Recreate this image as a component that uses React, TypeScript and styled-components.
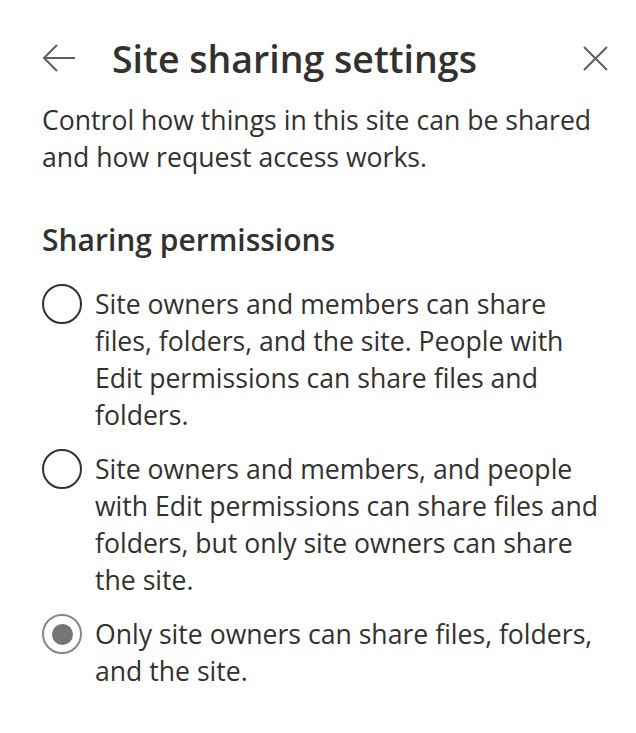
import styled, { createGlobalStyle } from "styled-components";

const GlobalStyle = createGlobalStyle`
  body {
    margin: 0;
    background: #ffffff;
    font-family: "Open Sans", "Noto Sans", sans-serif;
    color: #323130;
  }
`;

const Panel = styled.div`
  padding: 28px 28px 40px 42px;
`;

const Header = styled.div`
  display: flex;
  align-items: center;
  height: 60px;
`;

const IconButton = styled.button`
  display: flex;
  align-items: center;
  justify-content: center;
  background: none;
  border: none;
  padding: 0;
  cursor: pointer;
  color: #605e5c;
`;

const Title = styled.h1`
  flex: 1;
  margin: 0 0 0 36px;
  font-size: 37.5px;
  font-weight: 600;
`;

const Description = styled.p`
  margin: 14px 0 0;
  font-size: 26.6px;
  line-height: 37px;
`;

const SectionTitle = styled.h2`
  margin: 43px 0 0;
  font-size: 30px;
  font-weight: 600;
`;

const Options = styled.div`
  display: flex;
  flex-direction: column;
  gap: 17px;
  margin-top: 26px;
`;

const Option = styled.label`
  display: flex;
  align-items: flex-start;
  gap: 13px;
  font-size: 26.6px;
  line-height: 37px;
  cursor: pointer;
`;

const Radio = styled.span<{ $checked?: boolean }>`
  flex: none;
  box-sizing: border-box;
  width: 40px;
  height: 40px;
  margin-top: -2px;
  border-radius: 50%;
  border: 2px solid ${(p) => (p.$checked ? "#8a8886" : "#323130")};
  display: flex;
  align-items: center;
  justify-content: center;
  &::after {
    content: "";
    display: ${(p) => (p.$checked ? "block" : "none")};
    width: 21px;
    height: 21px;
    border-radius: 50%;
    background: #757575;
  }
`;

const options = [
  "Site owners and members can share files, folders, and the site. People with Edit permissions can share files and folders.",
  "Site owners and members, and people with Edit permissions can share files and folders, but only site owners can share the site.",
  "Only site owners can share files, folders, and the site.",
];

const App = () => {
  const selected = 2;
  return (
    <Panel>
      <GlobalStyle />
      <Header>
        <IconButton aria-label="Back">
          <svg width="34" height="30" viewBox="0 0 34 30" fill="none" stroke="currentColor" strokeWidth="2">
            <path d="M33 15H2M15 2L2 15l13 13" />
          </svg>
        </IconButton>
        <Title>Site sharing settings</Title>
        <IconButton aria-label="Close">
          <svg width="25" height="25" viewBox="0 0 25 25" fill="none" stroke="currentColor" strokeWidth="2">
            <path d="M1 1l23 23M24 1L1 24" />
          </svg>
        </IconButton>
      </Header>
      <Description>
        Control how things in this site can be shared and how request access works.
      </Description>
      <SectionTitle>Sharing permissions</SectionTitle>
      <Options>
        {options.map((text, i) => (
          <Option key={i}>
            <Radio $checked={i === selected} />
            <span>{text}</span>
          </Option>
        ))}
      </Options>
    </Panel>
  );
};

export default App;
